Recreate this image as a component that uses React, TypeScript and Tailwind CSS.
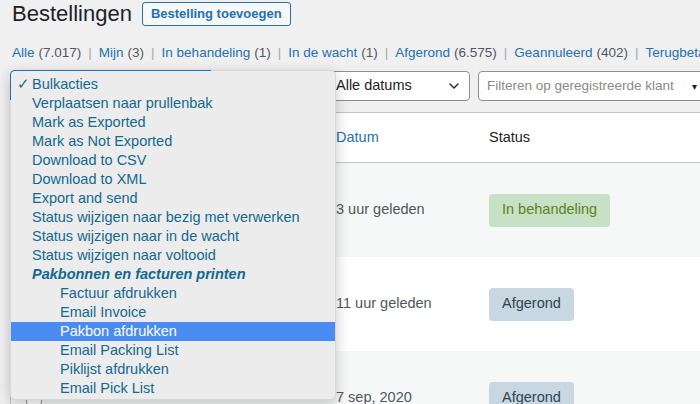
import { ChevronDown } from 'lucide-react';

const menuItems: { label: string; kind?: 'check' | 'group' | 'sub' | 'active' }[] = [
	{ label: 'Bulkacties', kind: 'check' },
	{ label: 'Verplaatsen naar prullenbak' },
	{ label: 'Mark as Exported' },
	{ label: 'Mark as Not Exported' },
	{ label: 'Download to CSV' },
	{ label: 'Download to XML' },
	{ label: 'Export and send' },
	{ label: 'Status wijzigen naar bezig met verwerken' },
	{ label: 'Status wijzigen naar in de wacht' },
	{ label: 'Status wijzigen naar voltooid' },
	{ label: 'Pakbonnen en facturen printen', kind: 'group' },
	{ label: 'Factuur afdrukken', kind: 'sub' },
	{ label: 'Email Invoice', kind: 'sub' },
	{ label: 'Pakbon afdrukken', kind: 'active' },
	{ label: 'Email Packing List', kind: 'sub' },
	{ label: 'Piklijst afdrukken', kind: 'sub' },
	{ label: 'Email Pick List', kind: 'sub' },
];

const views = [
	{ label: 'Alle', count: '(7.017)' },
	{ label: 'Mijn', count: '(3)' },
	{ label: 'In behandeling', count: '(1)' },
	{ label: 'In de wacht', count: '(1)' },
	{ label: 'Afgerond', count: '(6.575)' },
	{ label: 'Geannuleerd', count: '(402)' },
	{ label: 'Terugbetaald', count: '(37)' },
];

const rows = [
	{ date: '3 uur geleden', status: 'In behandeling', processing: true, bg: 'bg-[#f6f7f7]' },
	{ date: '11 uur geleden', status: 'Afgerond', processing: false, bg: 'bg-white' },
	{ date: '7 sep, 2020', status: 'Afgerond', processing: false, bg: 'bg-[#f6f7f7]' },
];

// Bulkacties dropdown zoals macOS het tekent
const BulkMenu = () => (
	<div className="absolute left-[10px] top-[70px] w-[326px] h-[330px] bg-[#ececec] rounded-[5px] border border-[#d6d6d6] shadow-[0_4px_14px_rgba(0,0,0,0.22)] pt-[4px] text-[14.5px] leading-[19px] text-[#13698f]">
		{/* focus-rand van het select, alleen boven en links zichtbaar */}
		<div className="absolute left-[-1px] top-[-1px] w-[201px] h-[30px] rounded-tl-[5px] border-t border-l border-[#2271b1]" />
		{menuItems.map((item) => {
			if (item.kind === 'active') {
				return (
					<div key={item.label} className="h-[19px] bg-[#4a8cf1] text-white pl-[49px]">
						{item.label}
					</div>
				);
			}
			if (item.kind === 'check') {
				return (
					<div key={item.label} className="h-[19px] flex">
						<span className="w-[21px] pl-[6px]">✓</span>
						<span>{item.label}</span>
					</div>
				);
			}
			if (item.kind === 'group') {
				return (
					<div key={item.label} className="h-[19px] pl-[21px] font-bold italic">
						{item.label}
					</div>
				);
			}
			return (
				<div key={item.label} className={`h-[19px] ${item.kind === 'sub' ? 'pl-[49px]' : 'pl-[21px]'}`}>
					{item.label}
				</div>
			);
		})}
	</div>
);

const App = () => {
	return (
		<div className="relative w-[700px] h-[404px] overflow-hidden bg-[#f0f0f1] font-['Liberation_Sans',Arial,sans-serif] text-[#1d2327]">
			{/* titel */}
			<div className="flex items-center gap-[10px] pl-[12px] pt-[1px] h-[26px]">
				<h1 className="text-[22px] leading-[26px] font-normal">Bestellingen</h1>
				<button className="h-[24px] px-[8px] rounded-[3px] border border-[#2271b1] bg-[#f6f7f7] text-[#2271b1] text-[13px] font-bold">
					Bestelling toevoegen
				</button>
			</div>

			{/* statusfilters */}
			<div className="flex items-center pl-[12px] mt-[18px] h-[18px] text-[13.5px] whitespace-nowrap">
				{views.map((v, i) => (
					<span key={v.label} className="flex items-center shrink-0">
						<span className="text-[#2271b1]">{v.label}</span>
						<span className="ml-[4px] text-[#50575e]">{v.count}</span>
						{i < views.length - 1 && <span className="mx-[7px] text-[#a7aaad]">|</span>}
					</span>
				))}
			</div>

			{/* tablenav */}
			<div className="flex items-center gap-[8px] pl-[10px] mt-[9px] h-[30px] whitespace-nowrap">
				<div className="w-[200px] h-[30px] shrink-0 rounded-[4px] border border-[#2271b1] bg-white" />
				<div className="w-[100px] h-[30px] shrink-0 rounded-[3px] border border-[#2271b1] bg-[#f6f7f7]" />
				<div className="w-[144px] h-[30px] shrink-0 rounded-[4px] border border-[#8c8f94] bg-white flex items-center justify-between pl-[9px] pr-[7px] text-[14.5px]">
					<span>Alle datums</span>
					<ChevronDown size={16} strokeWidth={2} className="text-[#1d2327]" />
				</div>
				<div className="w-[240px] h-[30px] shrink-0 rounded-[4px] border border-[#8c8f94] bg-white flex items-center justify-between pl-[8px] pr-[20px]">
					<span className="text-[#8a8a8a] text-[13.5px]">Filteren op geregistreerde klant</span>
					<span className="text-[#1d2327] text-[10px]">▾</span>
				</div>
			</div>

			{/* tabel */}
			<div className="mt-[11px] ml-[10px] border-t border-l border-[#c3c4c7] text-[14.5px]">
				<div className="flex items-center h-[50px] bg-white border-b border-[#c3c4c7]">
					<div className="w-[325px] shrink-0 pl-[15px]">
						<div className="w-[16px] h-[16px] rounded-[4px] border border-[#8c8f94] bg-white" />
					</div>
					<div className="w-[153px] shrink-0 text-[#2271b1]">Datum</div>
					<div>Status</div>
				</div>
				{rows.map((r) => (
					<div key={r.date} className={`flex items-center h-[94px] ${r.bg}`}>
						<div className="w-[325px] shrink-0 pl-[15px]">
							<div className="w-[16px] h-[16px] rounded-[4px] border border-[#8c8f94] bg-white" />
						</div>
						<div className="w-[153px] shrink-0 text-[#50575e]">{r.date}</div>
						<div
							className={`h-[33px] px-[13px] rounded-[4px] flex items-center ${
								r.processing ? 'bg-[#c6e1c6] text-[#5b841b]' : 'bg-[#c8d7e1] text-[#2e4453]'
							}`}
						>
							{r.status}
						</div>
					</div>
				))}
			</div>

			<BulkMenu />
		</div>
	);
};

export default App;
